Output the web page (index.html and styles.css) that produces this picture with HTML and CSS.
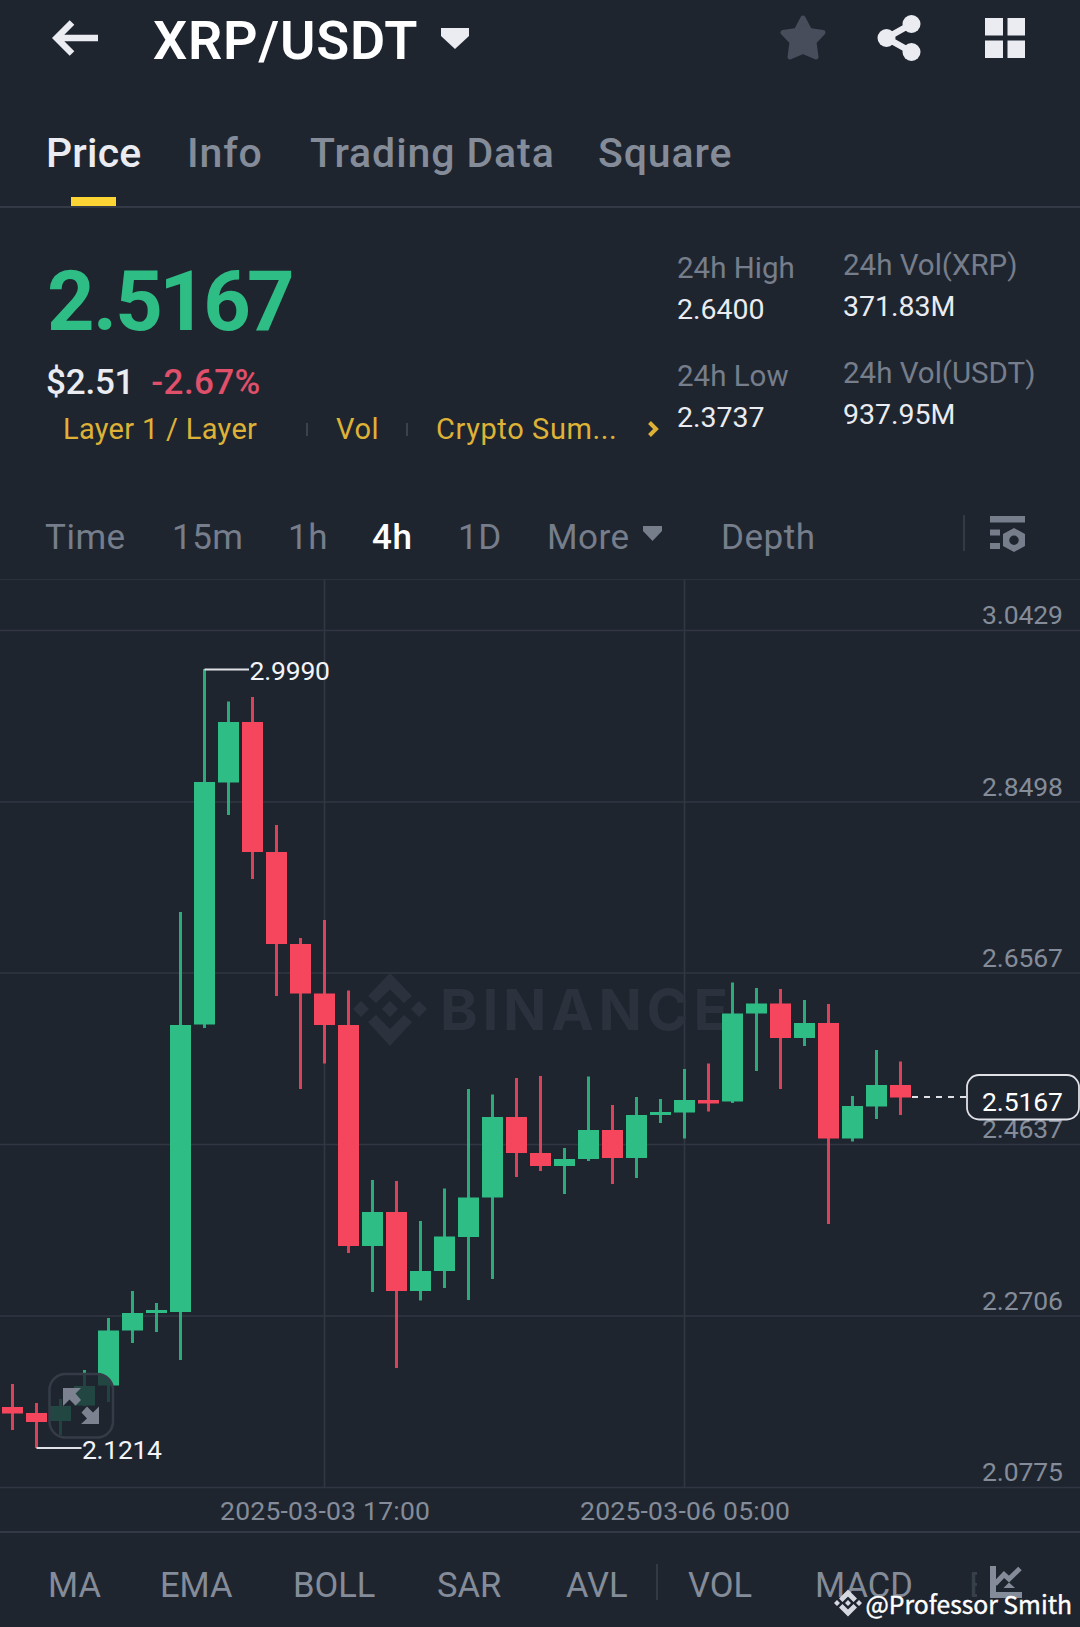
FILE: index.html
```html
<!DOCTYPE html>
<html lang="en">
<head>
  <meta charset="UTF-8" />
  <meta name="viewport" content="width=device-width, initial-scale=1.0" />
  <title>XRP/USDT</title>
  <link rel="stylesheet" href="styles.css">
</head>
<body>
  <header class="header">
    <svg class="back" width="47" height="36" viewBox="0 0 47 36">
      <path d="M20 2.500 L4.500 18 L20 33.500 M4.500 18 H46" fill="none" stroke="#eaecf2" stroke-width="6.500" />
    </svg>
    <h1>XRP/USDT</h1>
    <svg class="caret" width="28" height="21" viewBox="0 0 28 21">
      <path d="M0 0 H28 V8 L14 21 L0 8 Z" fill="#eaecf2" />
    </svg>
    <div class="header-icons">
      <svg width="46" height="46" viewBox="0 0 46 46">
        <path d="M23 3 L29.500 15.500 L43 17.500 L34 27 L36 42 L23 36.500 L10 42 L12 27 L3 17.500 L16.500 15.500 Z" fill="#474d5a" stroke="#474d5a" stroke-width="5" stroke-linejoin="round" />
      </svg>
      <svg width="44" height="46" viewBox="0 0 44 46">
        <path d="M34.500 9 L9.500 23 L34.500 37" fill="none" stroke="#eaecf2" stroke-width="6.500" />
        <circle cx="34.500" cy="9" r="9" fill="#eaecf2" />
        <circle cx="9.500" cy="23" r="9" fill="#eaecf2" />
        <circle cx="34.500" cy="37" r="9" fill="#eaecf2" />
      </svg>
      <svg width="40" height="40" viewBox="0 0 40 40">
        <path d="M0 0H18V17.500H0Z M22.500 0H40V17.500H22.500Z M0 22.500H18V40H0Z M22.500 22.500H40V40H22.500Z" fill="#eaecf2" />
      </svg>
    </div>
  </header>

  <nav class="tabs">
    <a class="tab active">Price</a>
    <a class="tab">Info</a>
    <a class="tab">Trading Data</a>
    <a class="tab">Square</a>
  </nav>

  <section class="summary">
    <div class="quote">
      <div class="price">2<span class="dot">.</span>5167</div>
      <div class="change"><span class="fiat">$2.51</span><span class="percent">-2.67%</span></div>
      <div class="tags">
        <span class="tag-layer">Layer 1 / Layer</span>
        <i></i>
        <span class="tag-vol">Vol</span>
        <i></i>
        <span class="tag-summary">Crypto Sum...</span>
        <svg width="14" height="18" viewBox="0 0 14 18">
          <path d="M2.500 2.500 L9 9 L2.500 15.500" fill="none" stroke="#deb236" stroke-width="4" />
        </svg>
      </div>
    </div>
    <dl class="stats stats-price">
      <dt>24h High</dt>
      <dd>2.6400</dd>
      <dt>24h Low</dt>
      <dd>2.3737</dd>
    </dl>
    <dl class="stats">
      <dt>24h Vol(XRP)</dt>
      <dd>371.83M</dd>
      <dt>24h Vol(USDT)</dt>
      <dd>937.95M</dd>
    </dl>
  </section>

  <div class="intervals">
    <span>Time</span>
    <span>15m</span>
    <span>1h</span>
    <span class="selected">4h</span>
    <span>1D</span>
    <span class="more">More
      <svg width="19" height="15" viewBox="0 0 19 15"><path d="M0 0 H19 V5 L9.500 15 L0 5 Z" fill="#767d8b" /></svg>
    </span>
    <span>Depth</span>
    <i></i>
    <svg width="36" height="36" viewBox="0 0 36 36">
      <path d="M0 0H35V6.500H0Z M0 13.500H10V19.500H0Z M0 27H10V33H0Z" fill="#767d8b" />
      <path fill-rule="evenodd" d="M24 12 L35 18 V30 L24 36 L13 30 V18 Z M24 19.500 A4.700 4.700 0 1 0 24 29 A4.700 4.700 0 1 0 24 19.500 Z" fill="#767d8b" />
    </svg>
  </div>

  <div class="chart">
    <svg width="1080" height="951" viewBox="0 580 1080 951">
      <g class="grid">
        <path d="M0 630.500H1080 M0 802H1080 M0 973H1080 M0 1144.500H1080 M0 1316H1080 M0 1487.500H1080" />
        <path d="M324.500 580V1487 M684.500 580V1487" />
      </g>

      <g class="brand">
        <path d="M368 996 L390 973 L412 996 L404 1003 L390 989.500 L376 1003 Z M368 1022 L376 1015 L390 1029 L404 1015 L412 1022 L390 1046 Z" />
        <path d="M361 1001 L369 1009 L361 1017 L353 1009 Z M390 1001 L398 1009 L390 1017 L382 1009 Z M419 1001 L427 1009 L419 1017 L411 1009 Z" />
        <text x="440" y="1029.500" textLength="288">BINANCE</text>
      </g>

      <g id="candles"></g>

      <g class="axis">
        <text x="982" y="624" textLength="81">3.0429</text>
        <text x="982" y="795.500" textLength="81">2.8498</text>
        <text x="982" y="966.500" textLength="81">2.6567</text>
        <text x="982" y="1138" textLength="81">2.4637</text>
        <text x="982" y="1309.500" textLength="81">2.2706</text>
        <text x="982" y="1481" textLength="81">2.0775</text>
        <text x="220" y="1519.500" textLength="210">2025-03-03 17:00</text>
        <text x="580" y="1519.500" textLength="210">2025-03-06 05:00</text>
      </g>

      <g class="marks">
        <path d="M204.500 669.500H249 M36.500 1448H81.500" />
        <text x="249.500" y="679.500" textLength="80.500">2.9990</text>
        <text x="82" y="1459" textLength="80">2.1214</text>
      </g>

      <g class="last">
        <path d="M912 1097H967" stroke-dasharray="6 6" />
        <rect x="967" y="1075" width="112" height="44.500" rx="12" />
        <text x="982" y="1111" textLength="81">2.5167</text>
      </g>

      <g class="expand">
        <rect x="49.500" y="1374" width="63.500" height="63.500" rx="16" />
        <path d="M63 1388H81L75.500 1393.500L81 1400L75.500 1405.500L69.500 1399.500L63 1406Z M99 1424H81L87 1418.500L81.500 1412.500L87 1406.500L93 1412.500L99 1406.500Z" />
      </g>
    </svg>
  </div>

  <footer class="indicators">
    <span>MA</span>
    <span>EMA</span>
    <span>BOLL</span>
    <span>SAR</span>
    <span>AVL</span>
    <i></i>
    <span>VOL</span>
    <span>MACD</span>
    <span class="faded">E</span>
    <svg width="33" height="33" viewBox="0 0 33 33">
      <path d="M0 0H6V26H32V32H0Z" fill="#858c99" />
      <path d="M5 18 L14 8.500 L19 13 L30 2.500" fill="none" stroke="#858c99" stroke-width="5" />
      <path d="M13.500 22 L19 16.500 L25 22 Z" fill="#858c99" />
    </svg>
  </footer>

  <div class="credit">
    <svg width="28" height="28" viewBox="0 0 28 28">
      <path d="M5 9.500 L14 0.500 L23 9.500 L19.500 13 L14 7.500 L8.500 13 Z M5 18.500 L8.500 15 L14 20.500 L19.500 15 L23 18.500 L14 27.500 Z" />
      <path d="M3 11 L6 14 L3 17 L0 14 Z M14 11 L17 14 L14 17 L11 14 Z M25 11 L28 14 L25 17 L22 14 Z" />
    </svg>
    <span>@Professor Smith</span>
  </div>

  <script src="chart.js"></script>
</body>
</html>
```

FILE: styles.css
```css
* {
  box-sizing: border-box;
}
body {
  margin: 0;
  width: 1080px;
  height: 1627px;
  overflow: hidden;
  position: relative;
  background-color: #1f252f;
  color: #eaecf2;
  font-family: Roboto, "Liberation Sans", sans-serif;
}
svg {
  display: block;
  flex: none;
}

/* Header */
.header {
  display: flex;
  align-items: center;
  height: 76px;
  padding: 0 55px 0 52px;
}
.header h1 {
  width: 265px;
  margin: 5px 0 0 54px;
  color: #fff;
  font-size: 54px;
  font-weight: 600;
  line-height: 64px;
  letter-spacing: 0.8px;
  white-space: nowrap;
}
.caret {
  margin-left: 23px;
}
.header-icons {
  display: flex;
  align-items: center;
  margin-left: auto;
}
.header-icons svg + svg {
  margin-left: 51px;
}
.header-icons svg + svg + svg {
  margin-left: 64px;
}

/* Tabs */
.tabs {
  display: grid;
  grid-template-columns: 141px 123px 288px auto;
  justify-items: start;
  height: 132px;
  padding: 49px 0 0 46px;
  border-bottom: 2px solid #333a46;
}
.tab {
  color: #858c99;
  font-size: 41px;
  font-weight: 500;
  line-height: 56px;
  letter-spacing: 0.9px;
  white-space: nowrap;
}
.tab.active {
  color: #eaecf2;
  letter-spacing: 0.2px;
}
.tab.active::after {
  content: "";
  display: block;
  width: 45px;
  height: 9px;
  margin: 16px auto 0;
  background-color: #fcd535;
}

/* Price summary */
.summary {
  display: grid;
  grid-template-columns: 631px 166px auto;
  height: 307px;
  padding: 36px 0 0 46px;
}
.quote {
  padding-top: 18px;
}
.price {
  padding-left: 1px;
  color: #2ebd85;
  font-size: 83px;
  font-weight: 700;
  line-height: 80px;
  letter-spacing: -3.7px;
}
.price .dot {
  margin: 0 2px;
}
.change {
  display: flex;
  gap: 17px;
  margin-top: 19px;
  font-size: 35px;
  font-weight: 500;
  line-height: 44px;
}
.fiat {
  letter-spacing: -0.2px;
}
.percent {
  color: #e0506a;
  letter-spacing: 0.4px;
}
.tags {
  display: flex;
  align-items: center;
  margin-top: 4px;
  padding-left: 17px;
  color: #deb236;
  font-size: 29px;
  line-height: 40px;
  letter-spacing: 0.6px;
  white-space: nowrap;
}
.tags i {
  width: 2px;
  height: 13px;
  background-color: #3a424e;
}
.tag-layer {
  width: 243px;
  letter-spacing: 0.3px;
}
.tag-vol {
  width: 98px;
  padding-left: 28px;
}
.tag-summary {
  width: 239px;
  padding-left: 28px;
}
.stats {
  margin: 0;
  font-size: 29.5px;
  line-height: 42.3px;
  white-space: nowrap;
}
.stats-price {
  padding-top: 3px;
}
.stats dt {
  color: #767d8b;
}
.stats dd {
  margin: 0 0 23px;
  font-size: 28.5px;
}

/* Chart intervals */
.intervals {
  display: grid;
  grid-template-columns: 127px 116px 84px 86px 89px 174px 242px 27px auto;
  align-items: center;
  height: 65px;
  padding: 0 0 20px 45px;
  border-bottom: 1px solid #2b323e;
  color: #767d8b;
  font-size: 35px;
  letter-spacing: 0.5px;
  white-space: nowrap;
}
.intervals .selected {
  color: #fff;
  font-weight: 500;
}
.intervals i {
  width: 2px;
  height: 36px;
  margin-bottom: 8px;
  background-color: #333a46;
}
.intervals > svg {
  margin-bottom: 6px;
}
.more {
  display: flex;
  align-items: center;
  gap: 13px;
}
.more svg {
  margin-bottom: 7px;
}

/* Chart */
.chart {
  border-bottom: 2px solid #333a46;
}
.grid path {
  fill: none;
  stroke: #303743;
  stroke-width: 1.7;
}
.brand {
  fill: #2b323d;
}
.brand text {
  font-family: Inter, Roboto, sans-serif;
  font-size: 57px;
  font-weight: 700;
}
.axis text,
.marks text,
.last text {
  font-size: 26.5px;
}
.axis {
  fill: #858c99;
}
.up {
  fill: #2ebd85;
}
.down {
  fill: #f6465d;
}
.wick {
  opacity: 0.88;
}
.marks {
  fill: #f3f4f8;
}
.marks path {
  stroke: #dfe1e7;
  stroke-width: 1.8;
}
.last path,
.last rect {
  fill: #1f252f;
  stroke: #dfe1e7;
  stroke-width: 1.8;
}
.last text {
  fill: #fff;
}
.expand rect {
  fill: #1f252f;
  fill-opacity: 0.78;
  stroke: #353c48;
  stroke-width: 2.5;
}
.expand path {
  fill: #7c8290;
}

/* Indicators */
.indicators {
  display: grid;
  grid-template-columns: 112px 133px 144px 129px 90px 32px 127px 154px 19px auto;
  align-items: center;
  height: 82px;
  padding: 22px 0 0 48px;
  color: #858c99;
  font-size: 34.5px;
  line-height: 60px;
}
.indicators i {
  width: 2px;
  height: 36px;
  margin-bottom: 6px;
  background-color: #333a46;
}
.indicators svg {
  margin: 0 0 5px 2px;
}
.indicators .faded {
  width: 8px;
  overflow: hidden;
  opacity: 0.25;
}

/* Author mark over the indicators */
.credit {
  position: absolute;
  right: 8px;
  bottom: 7px;
  display: flex;
  align-items: center;
  gap: 3px;
  color: #fff;
  font-family: "Noto Sans CJK SC", "Noto Sans", sans-serif;
  font-size: 24.7px;
  font-weight: 400;
  line-height: 34px;
  -webkit-text-stroke: 0.4px #fff;
  white-space: nowrap;
}
.credit svg {
  fill: #d5d8e0;
}
```

FILE: chart.js
```js
// [direction, high, body top, body bottom, low]
const candles = [
  ['down', 1384, 1407, 1413.5, 1430],
  ['down', 1403, 1413, 1422, 1448],
  ['up', 1399, 1406, 1421, 1435],
  ['up', 1370, 1386, 1405.5, 1406],
  ['up', 1318, 1330.5, 1385.5, 1402],
  ['up', 1291, 1313, 1330.5, 1343],
  ['up', 1303, 1310, 1313, 1332],
  ['up', 912, 1025, 1312, 1360],
  ['up', 669, 782, 1024.5, 1028],
  ['up', 701.5, 722, 782.5, 815],
  ['down', 697, 722, 852, 879],
  ['down', 825, 852, 944, 996],
  ['down', 938, 944, 993.5, 1089],
  ['down', 920, 993.5, 1025, 1063.5],
  ['down', 990.5, 1025, 1246, 1253],
  ['up', 1180, 1212, 1246, 1292],
  ['down', 1181, 1212, 1291, 1368],
  ['up', 1221, 1271, 1291, 1300.5],
  ['up', 1188.5, 1236.5, 1271, 1288],
  ['up', 1089, 1197.5, 1237, 1300],
  ['up', 1094.5, 1117, 1197.5, 1279],
  ['down', 1078, 1117, 1153, 1177],
  ['down', 1076, 1153, 1166, 1171],
  ['up', 1148, 1159, 1166, 1194],
  ['up', 1076.5, 1130, 1159, 1161],
  ['down', 1105, 1130, 1158, 1184],
  ['up', 1097, 1115, 1158, 1178],
  ['up', 1099, 1112, 1115, 1123],
  ['up', 1069, 1100, 1112.5, 1138.5],
  ['down', 1063.5, 1100, 1103.5, 1111.5],
  ['up', 982.5, 1013.5, 1101.5, 1103],
  ['up', 988, 1003.5, 1013.5, 1071],
  ['down', 989, 1003.5, 1038, 1089],
  ['up', 1000, 1023, 1038, 1046],
  ['down', 1004, 1023, 1138.5, 1224],
  ['up', 1096, 1106, 1138.5, 1141.5],
  ['up', 1050, 1085, 1106.5, 1119],
  ['down', 1061.5, 1085, 1097.5, 1115]
];

const group = document.getElementById('candles');

function addRect(className, x, y, width, height) {
  const rect = document.createElementNS('http://www.w3.org/2000/svg', 'rect');
  rect.setAttribute('class', className);
  rect.setAttribute('x', x);
  rect.setAttribute('y', y);
  rect.setAttribute('width', width);
  rect.setAttribute('height', height);
  group.appendChild(rect);
}

candles.forEach(([direction, high, top, bottom, low], i) => {
  const x = 2 + i * 24;
  addRect(direction + ' wick', x + 9, high, 3, low - high);
  addRect(direction, x, top, 21, bottom - top);
});
```
